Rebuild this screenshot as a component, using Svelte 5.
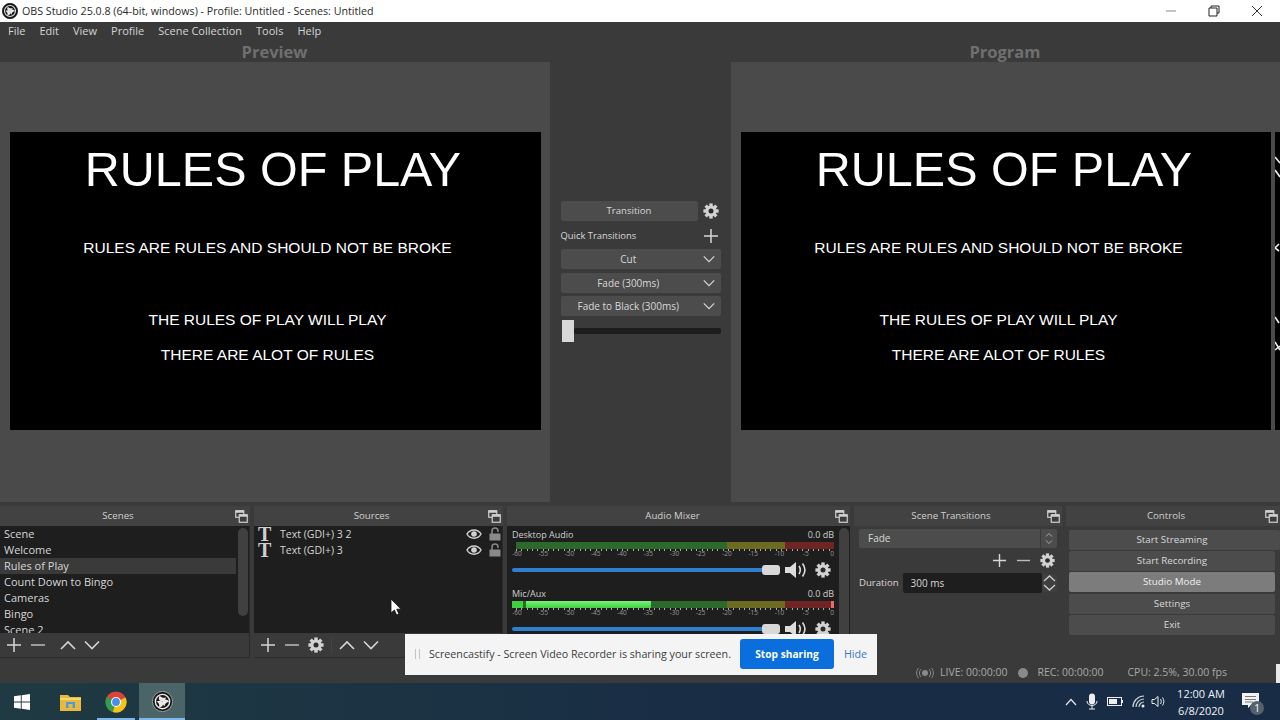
<script>
  const menus = ['File','Edit','View','Profile','Scene Collection','Tools','Help'];
  const scenes = ['Scene','Welcome','Rules of Play','Count Down to Bingo','Cameras','Bingo','Scene 2'];
  const ticks = ['-60','-55','-50','-45','-40','-35','-30','-25','-20','-15','-10','-5','0'];
  const teeth = [0,45,90,135];
  const controls = ['Start Streaming','Start Recording','Studio Mode','Settings','Exit'];
</script>

{#snippet gear(size = 16)}
  <svg class="icon" width={size} height={size} viewBox="0 0 16 16">
    {#each teeth as t}
      <rect x="6.3" y="0.4" width="3.4" height="15.2" fill="#d2d2d2" transform="rotate({t} 8 8)" />
    {/each}
    <circle cx="8" cy="8" r="5.6" fill="#d2d2d2" />
    <circle cx="8" cy="8" r="2.5" fill="#2b2b2b" />
  </svg>
{/snippet}
{#snippet plus(size = 16)}
  <svg class="icon" width={size} height={size} viewBox="0 0 16 16"><path d="M8 1v14M1 8h14" stroke="#d6d6d6" stroke-width="1.5" fill="none" /></svg>
{/snippet}
{#snippet minus(size = 16)}
  <svg class="icon" width={size} height={size} viewBox="0 0 16 16"><path d="M1 8h14" stroke="#bdbdbd" stroke-width="1.5" fill="none" /></svg>
{/snippet}
{#snippet up()}
  <svg class="icon" width="16" height="16" viewBox="0 0 16 16"><path d="M1 12l7-7 7 7" stroke="#d6d6d6" stroke-width="1.6" fill="none" /></svg>
{/snippet}
{#snippet down(size = 16)}
  <svg class="icon" width={size} height={size} viewBox="0 0 16 16"><path d="M1 4.5l7 7 7-7" stroke="#d6d6d6" stroke-width="1.6" fill="none" /></svg>
{/snippet}
{#snippet float()}
  <svg class="float" width="13" height="13" viewBox="0 0 13 13"><rect x="0.75" y="0.75" width="8" height="6.5" fill="#3c3c3c" stroke="#d2d2d2" stroke-width="1.2" /><rect x="0.75" y="0.75" width="8" height="2" fill="#d2d2d2" /><rect x="4.25" y="4.75" width="8" height="7.5" fill="#3c3c3c" stroke="#d2d2d2" stroke-width="1.2" /><rect x="4.25" y="4.75" width="8" height="2" fill="#d2d2d2" /></svg>
{/snippet}
{#snippet obs(size, ring)}
  <svg class="icon" width={size} height={size} viewBox="0 0 24 24">
    <circle cx="12" cy="12" r="11.5" fill="#151515" stroke={ring} stroke-width="1" />
    <circle cx="12" cy="12" r="8.2" fill="none" stroke="#e8e8e8" stroke-width="1.6" />
    <path d="M12 12C8 12 6.5 8 9 5.5 11 8 14 8.5 16 7 15.5 9.5 14.5 11 12 12Z" fill="#e8e8e8" />
    <path d="M12 12C14 15.5 11.5 19 8 18.5 9 15.5 7.5 13 5 12 7.4 11 9.5 10.5 12 12Z" fill="#e8e8e8" />
    <path d="M12 12C14 8.5 18.5 9.2 19.5 12.5 16.5 12.5 14.5 14.5 14.5 17.5 12.5 16 11.6 14.5 12 12Z" fill="#e8e8e8" />
  </svg>
{/snippet}
{#snippet scene()}
  <div class="scene-text">
    <div class="big">RULES OF PLAY</div>
    <div class="line l1">RULES ARE RULES AND SHOULD NOT BE BROKE</div>
    <div class="line l2">THE RULES OF PLAY WILL PLAY</div>
    <div class="line l3">THERE ARE ALOT OF RULES</div>
  </div>
{/snippet}
{#snippet meter(active)}
  <div class="meter" class:active>
    <div class="bars"></div>
    {#if active}<div class="hot"></div><div class="tip"></div>{/if}
  </div>
  <div class="scale"></div>
  <div class="tick-labels">{#each ticks as t}<span>{t}</span>{/each}</div>
{/snippet}
{#snippet fader()}
  <div class="fader-row">
    <div class="fader"><div class="knob"></div></div>
    <svg class="icon" width="24" height="20" viewBox="0 0 24 20"><path d="M1 7h5l6-5v16l-6-5H1z" fill="#dcdcdc" /><path d="M15 6c1.6 2.5 1.6 5.5 0 8M18.5 3.5c3 4 3 9 0 13" stroke="#dcdcdc" stroke-width="1.6" fill="none" /></svg>
    {@render gear(16)}
  </div>
{/snippet}

<div class="window">
  <header class="titlebar">
    {@render obs(16, '#151515')}
    <span class="title">OBS Studio 25.0.8 (64-bit, windows) - Profile: Untitled - Scenes: Untitled</span>
    <div class="winbtns">
      <svg width="12" height="12" viewBox="0 0 12 12"><path d="M1 6h10" stroke="#888" stroke-width="1" /></svg>
      <svg width="12" height="12" viewBox="0 0 12 12"><path d="M3 3V1h8v7H9M1 3h8v8H1z" stroke="#222" fill="none" /></svg>
      <svg width="12" height="12" viewBox="0 0 12 12"><path d="M1 1l10 10M11 1L1 11" stroke="#333" stroke-width="1" /></svg>
    </div>
  </header>

  <nav class="menubar">{#each menus as m}<span>{m}</span>{/each}</nav>

  <div class="labels">
    <span class="lab lab-prev">Preview</span>
    <span class="lab lab-prog">Program</span>
  </div>

  <main class="stage">
    <section class="pane left"><div class="canvas cl">{@render scene()}</div></section>
    <section class="middle">
      <div class="trow">
        <div class="btn transition">Transition</div>
        {@render gear(16)}
      </div>
      <div class="qrow"><span>Quick Transitions</span>{@render plus(16)}</div>
      <div class="btn combo"><span>Cut</span>{@render down(12)}</div>
      <div class="btn combo"><span>Fade (300ms)</span>{@render down(12)}</div>
      <div class="btn combo"><span>Fade to Black (300ms)</span>{@render down(12)}</div>
      <div class="tslider"><div class="handle"></div><div class="track"></div></div>
    </section>
    <section class="pane right">
      <div class="canvas cr">{@render scene()}</div>
      <div class="sliver">
        <svg width="5" height="298" viewBox="0 0 5 298"><path d="M0 25l5 6M0 38l5 7M4 112l-4 4 4 3M0 185l4 6M0 210l5 8M0 218l5-4" stroke="#eee" stroke-width="1.6" fill="none" /></svg>
      </div>
    </section>
  </main>

  <div class="docks">
    <section class="dock d-scenes">
      <div class="dock-title"><span>Scenes</span>{@render float()}</div>
      <div class="dock-body">
        <div class="list-wrap">
          <ul class="list">
            {#each scenes as s, i}<li class:sel={i === 2}>{s}</li>{/each}
          </ul>
          <div class="scroll"><div class="thumb"></div></div>
        </div>
        <div class="tools">{@render plus(16)}{@render minus(16)}<i class="sp"></i>{@render up()}{@render down()}</div>
      </div>
    </section>

    <section class="dock d-sources">
      <div class="dock-title"><span>Sources</span>{@render float()}</div>
      <div class="dock-body">
        <ul class="list src">
          {#each ['Text (GDI+) 3 2','Text (GDI+) 3'] as s}
            <li>
              <b class="tglyph">T</b><span class="sname">{s}</span>
              <svg class="icon" width="16" height="12" viewBox="0 0 16 12"><path d="M1 6c3-5.500 11-5.500 14 0-3 5.500-11 5.500-14 0z" fill="none" stroke="#d0d0d0" stroke-width="1.500" /><circle cx="8" cy="6" r="2.800" fill="#d0d0d0" /></svg>
              <svg class="icon lock" width="12" height="14" viewBox="0 0 12 14"><path d="M3 7V4a3 3 0 0 1 6 0v1" fill="none" stroke="#8a8a8a" stroke-width="1.500" /><rect x="0.500" y="6.500" width="11" height="7" fill="#8a8a8a" /></svg>
            </li>
          {/each}
        </ul>
        <div class="tools">{@render plus(16)}{@render minus(16)}{@render gear(16)}<i class="sep"></i>{@render up()}{@render down()}</div>
      </div>
    </section>

    <section class="dock d-mixer">
      <div class="dock-title"><span>Audio Mixer</span>{@render float()}</div>
      <div class="mixer-body">
        <div class="channels">
          <div class="channel">
            <div class="chead"><span>Desktop Audio</span><span>0.0 dB</span></div>
            {@render meter(false)}
            {@render fader()}
          </div>
          <div class="channel">
            <div class="chead"><span>Mic/Aux</span><span>0.0 dB</span></div>
            {@render meter(true)}
            {@render fader()}
          </div>
        </div>
        <div class="scroll mix"><div class="thumb"></div></div>
      </div>
    </section>

    <section class="dock d-trans">
      <div class="dock-title"><span>Scene Transitions</span>{@render float()}</div>
      <div class="plain">
        <div class="btn fade">
          <span>Fade</span>
          <svg width="16" height="19" viewBox="0 0 16 19"><path d="M5 7.500l3-3 3 3M5 11.500l3 3 3-3" stroke="#a8a8a8" fill="none" /></svg>
        </div>
        <div class="pm">{@render plus(15)}{@render minus(15)}{@render gear(15)}</div>
        <div class="dur">
          <span>Duration</span>
          <div class="spin"><span>300 ms</span></div>
          <div class="arrows">
            <svg width="15" height="9" viewBox="0 0 15 9"><path d="M2 7l5.500-5 5.500 5" stroke="#d0d0d0" stroke-width="1.300" fill="none" /></svg>
            <svg width="15" height="9" viewBox="0 0 15 9"><path d="M2 2l5.500 5 5.500-5" stroke="#d0d0d0" stroke-width="1.300" fill="none" /></svg>
          </div>
        </div>
      </div>
    </section>

    <section class="dock d-ctrl">
      <div class="dock-title"><span>Controls</span>{@render float()}</div>
      <div class="ctrl-list">
        {#each controls as c}<div class="btn ctrl" class:on={c === 'Studio Mode'}>{c}</div>{/each}
      </div>
    </section>
  </div>

  <footer class="status">
    <svg class="icon" width="18" height="12" viewBox="0 0 18 12"><circle cx="9" cy="6" r="3" fill="#8a8a8a" /><path d="M5 2c-2 2-2 6 0 8M13 2c2 2 2 6 0 8M2.500 1c-2.500 3-2.500 7 0 10M15.500 1c2.500 3 2.500 7 0 10" stroke="#8a8a8a" fill="none" /></svg>
    <span class="st-live">LIVE: 00:00:00</span>
    <i class="recdot"></i>
    <span class="st-rec">REC: 00:00:00</span>
    <span class="st-cpu">CPU: 2.5%, 30.00 fps</span>
    <i class="st-edge"></i>
  </footer>

  <div class="taskbar">
    <div class="tb-item start">
      <svg width="16" height="16" viewBox="0 0 16 16"><path d="M0 2.300l6.800-1v6.300H0zM7.700 1.200L16 0v7.600H7.700zM0 8.400h6.800v6.300L0 13.700zM7.700 8.400H16V16l-8.300-1.200z" fill="#fff" /></svg>
    </div>
    <div class="tb-item">
      <svg width="21" height="18" viewBox="0 0 21 18"><path d="M0 2h8l2 2h11v14H0z" fill="#e8b93e" /><path d="M0 5h21v2H0z" fill="#f6d76a" /><rect x="6" y="9" width="9" height="6" fill="#4f9ad6" /><rect x="8.500" y="11" width="4" height="4" fill="#e8b93e" /></svg>
    </div>
    <div class="tb-item open">
      <svg width="22" height="22" viewBox="0 0 22 22">
        <circle cx="11" cy="11" r="10.500" fill="#db4437" />
        <path d="M11 11L1.900 5.800A10.500 10.500 0 0 0 7.800 21z" fill="#2f9e4f" />
        <path d="M11 11l9.500-4.500A10.500 10.500 0 0 1 7.800 21z" fill="#f5c518" />
        <circle cx="11" cy="11" r="5" fill="#fff" /><circle cx="11" cy="11" r="3.900" fill="#4a8df0" />
      </svg>
    </div>
    <div class="tb-item active">{@render obs(21, '#aaa')}</div>

    <div class="tray">
      <svg width="12" height="8" viewBox="0 0 12 8"><path d="M1 7l5-5.500L11 7" stroke="#e8e8e8" stroke-width="1.200" fill="none" /></svg>
      <svg width="12" height="17" viewBox="0 0 12 17"><rect x="3" y="0.500" width="6" height="11" rx="3" fill="#eee" /><path d="M1 8c0 6 10 6 10 0M6 13v3M3 16h6" stroke="#eee" fill="none" /></svg>
      <svg width="16" height="9" viewBox="0 0 16 9"><rect x="0.500" y="0.500" width="14" height="8" fill="none" stroke="#eee" /><rect x="2" y="2" width="8" height="5" fill="#eee" /><rect x="15" y="3" width="1" height="3" fill="#eee" /></svg>
      <svg width="14" height="13" viewBox="0 0 14 13"><path d="M1 12a11 11 0 0 1 11-11M4 12a8 8 0 0 1 8-8M7 12a5 5 0 0 1 5-5" stroke="#c9d3dc" fill="none" stroke-width="1.200" /><circle cx="11" cy="11" r="1.500" fill="#eee" /></svg>
      <svg class="speaker" width="14" height="13" viewBox="0 0 14 13"><path d="M1 4.500h2.500l3.500-3v10l-3.500-3H1z" fill="none" stroke="#eee" /><path d="M9.500 4c1 1.500 1 3.500 0 5M11.500 2.500c1.800 2.500 1.800 5.500 0 8" stroke="#eee" fill="none" /></svg>
    </div>
    <div class="clock"><span>12:00 AM</span><span>6/8/2020</span></div>
    <div class="notif">
      <svg width="17" height="16" viewBox="0 0 17 16"><path d="M0 0h17v12h-8l-3 3v-3H0z" fill="#f2f2f2" /><path d="M3 3.500h11M3 6.500h11M3 9h8" stroke="#777" /></svg>
      <b>1</b>
    </div>
  </div>

  <div class="share">
    <span class="grip"></span>
    <span class="share-text">Screencastify - Screen Video Recorder is sharing your screen.</span>
    <span class="stop">Stop sharing</span>
    <span class="hide">Hide</span>
  </div>

  <svg class="cursor" width="12" height="18" viewBox="0 0 12 18"><path d="M1 1v14l3.400-3 2.200 5 2.300-1-2.200-4.800H11z" fill="#fff" stroke="#111" stroke-width="0.800" /></svg>
</div>

<style>
  :global(body) { margin: 0; background: #3a3a3a; }
  .window { position: relative; width: 1280px; height: 720px; overflow: hidden; display: flex; flex-direction: column; background: #3a3a3a; color: #d8d8d8; font: 11px/1 "Open Sans", "Noto Sans", sans-serif; }
  .icon { display: block; flex: none; }

  .titlebar { height: 22px; flex: none; background: #fff; display: flex; align-items: center; padding-left: 2px; color: #2a2a2a; box-sizing: border-box; }
  .title { margin-left: 4px; font-size: 10.7px; white-space: nowrap; }
  .winbtns { margin-left: auto; display: flex; gap: 31px; padding-right: 17px; }

  .menubar { height: 20px; flex: none; display: flex; align-items: center; gap: 14px; padding: 0 0 3px 8px; box-sizing: border-box; color: #d4d4d4; }
  .labels { height: 20px; flex: none; display: flex; align-items: center; font-weight: 700; font-size: 16.5px; color: #6f6f6f; }
  .lab { text-align: center; }
  .lab-prev { width: 551px; }
  .lab-prog { width: 552px; margin-left: 181px; }

  .stage { height: 440px; flex: none; display: flex; }
  .pane { background: #4a4a4a; display: flex; padding-top: 70px; box-sizing: border-box; }
  .left { width: 550px; padding-left: 10px; }
  .right { flex: 1; padding-left: 10px; }
  .canvas { background: #000; height: 298px; flex: none; overflow: hidden; }
  .cl { width: 531px; }
  .cr { width: 530px; }
  .sliver { margin-left: 4px; width: 5px; height: 298px; background: #000; }
  .sliver svg { display: block; }
  .scene-text { width: 515px; text-align: center; color: #fff; font-family: "Liberation Sans", Arial, sans-serif; white-space: nowrap; }
  .big { font-size: 48.5px; line-height: 52px; padding-top: 11px; margin-left: 11px; }
  .line { font-size: 15.5px; line-height: 18px; }
  .l1 { margin-top: 44px; }
  .l2 { margin-top: 54px; }
  .l3 { margin-top: 17px; }

  .middle { width: 181px; flex: none; box-sizing: border-box; padding: 139px 10px 0 10.500px; display: flex; flex-direction: column; }
  .btn { background: #4c4c4c; border-radius: 2px; display: flex; align-items: center; justify-content: center; color: #d8d8d8; font-size: 10px; box-sizing: border-box; }
  .trow { display: flex; align-items: center; justify-content: space-between; height: 20px; padding-right: 2px; }
  .transition { width: 137px; height: 20px; font-size: 9.600px; }
  .qrow { display: flex; align-items: center; justify-content: space-between; height: 20px; margin: 5px 0 3px; padding-right: 2px; font-size: 9.400px; }
  .combo { height: 20px; flex: none; margin-bottom: 3.500px; position: relative; padding-right: 25px; }
  .combo svg { position: absolute; right: 6px; top: 4px; }
  .tslider { position: relative; display: flex; align-items: center; height: 22px; padding-left: 1px; }
  .handle { width: 12px; height: 22px; background: #d8d8d8; flex: none; }
  .track { flex: 1; height: 6px; background: #1c1c1c; border-radius: 2px; }

  .docks { height: 160px; flex: none; display: flex; gap: 4px; padding-top: 3.500px; box-sizing: border-box; }
  .dock { flex: none; display: flex; flex-direction: column; min-width: 0; }
  .d-scenes { width: 250px; }
  .d-sources { width: 249px; }
  .d-mixer { width: 343px; }
  .d-trans { width: 208px; }
  .d-ctrl { width: 214px; }
  .dock-title { height: 20px; flex: none; position: relative; display: flex; align-items: center; justify-content: center; background: #424242; color: #cfcfcf; font-size: 9.700px; }
  .dock-title span { margin-right: 14px; }
  .d-mixer .dock-title span { margin-right: 12px; }
  .float { position: absolute; right: 2px; top: 4px; }
  .dock-body { flex: none; height: 132px; display: flex; flex-direction: column; border: 1px solid #2a2a2a; border-top: 0; border-left: 0; box-sizing: border-box; }
  .list-wrap { flex: none; height: 107px; display: flex; background: #1e1e1e; overflow: hidden; }
  .list { list-style: none; margin: 0; padding: 0; flex: 1; background: #1e1e1e; }
  .list li { height: 16px; line-height: 16px; padding-left: 4px; color: #d6d6d6; white-space: nowrap; }
  .list li.sel { background: #3a3a3a; }
  .scroll { width: 13px; flex: none; background: #1e1e1e; display: flex; justify-content: center; }
  .thumb { width: 10px; height: 88px; margin-top: 2px; background: #404040; border-radius: 5px; }
  .tools { height: 24px; flex: none; display: flex; align-items: center; gap: 8px; padding-left: 6px; background: #3a3a3a; }
  .tools .sp { width: 0; margin-left: -2px; }
  .tools .sep { width: 0; height: 16px; border-left: 1px solid #444; margin: 0 -1px; }
  .src { height: 107px; flex: none; }
  .src li { display: flex; align-items: center; padding-left: 4px; }
  .tglyph { width: 22px; font: 700 20px/16px "Liberation Serif", serif; color: #cfcfcf; flex: none; }
  .sname { flex: 1; font-size: 10.500px; }
  .lock { margin: 0 1px 0 7px; }

  .mixer-body { height: 132px; flex: none; display: flex; background: #1e1e1e; overflow: hidden; }
  .channels { flex: 1; padding: 4px 0 0 5px; min-width: 0; }
  .channel { height: 59px; padding-right: 3px; }
  .chead { display: flex; justify-content: space-between; font-size: 9px; height: 10px; align-items: center; color: #cfcfcf; }
  .meter { margin: 2px 0 0 4px; height: 7px; position: relative; background: #000; }
  .bars { height: 100%; background: linear-gradient(90deg, #2b6a2b 0 66.400%, #6d6a22 66.400% 84.600%, #702525 84.600%); }
  .hot { position: absolute; top: 0; bottom: 0; left: 10px; width: 125px; background: linear-gradient(#7cf07c, #3fd03f); }
  .hot::before { content: ""; position: absolute; left: -14px; top: 0; bottom: 0; width: 11px; background: #3fd03f; }
  .tip { position: absolute; right: 0; top: 0; bottom: 0; width: 3px; background: #e86a6a; }
  .scale { margin-left: 4px; height: 2px; background: repeating-linear-gradient(90deg, #aaa 0 1px, transparent 1px 5.300px); }
  .tick-labels { display: flex; justify-content: space-between; margin: 0 -3px 0 0; font-size: 6.500px; height: 8px; align-items: center; color: #9a9a9a; }
  .tick-labels span { width: 10px; text-align: center; }
  .fader-row { display: flex; align-items: center; gap: 7px; height: 18px; margin-top: 2px; padding-right: 3px; }
  .fader { flex: 1; height: 4px; background: #2f7fd0; border-radius: 2px; position: relative; margin-right: -3px; }
  .knob { position: absolute; right: 0; top: -3px; width: 18px; height: 10px; border-radius: 3px; background: #d8d8d8; }
  .mix { width: 13px; }
  .mix .thumb { height: 120px; }

  .plain { padding: 3px 5px 0 5px; display: flex; flex-direction: column; }
  .fade { height: 19px; justify-content: space-between; padding: 0 0 0 9px; }
  .fade svg { border-left: 1px solid #3a3a3a; }
  .pm { display: flex; justify-content: flex-end; align-items: center; gap: 9px; height: 24px; margin-top: 1px; padding-right: 2px; }
  .dur { display: flex; align-items: center; height: 20px; gap: 4px; font-size: 9.600px; }
  .spin { flex: 1; height: 20px; background: #1e1e1e; display: flex; align-items: center; padding-left: 8px; border-radius: 2px; font-size: 10px; }
  .arrows { margin-left: -4px; background: #3f3f3f; border-radius: 2px; }
  .arrows svg { display: block; }

  .ctrl-list { padding: 4px 0 0 3px; display: flex; flex-direction: column; gap: 1.400px; }
  .ctrl { height: 20px; width: 206px; font-size: 9.800px; }
  .ctrl:first-child { width: 211px; padding-right: 5px; }
  .ctrl.on { background: #7c7c7c; color: #eee; }

  .status { height: 21px; flex: none; position: relative; display: flex; align-items: center; padding-left: 916px; color: #a8a8a8; font-size: 10.500px; white-space: nowrap; }
  .st-live { margin-left: 6px; }
  .recdot { width: 10px; height: 10px; border-radius: 50%; background: #8a8a8a; margin-left: 10px; }
  .st-rec { margin-left: 10px; }
  .st-cpu { margin-left: 24px; }
  .st-edge { position: absolute; right: 0; top: 2px; bottom: 0; width: 4px; background: #e8e8e8; }

  .taskbar { flex: 1; display: flex; align-items: stretch; background: linear-gradient(90deg, #1f3a42, #182c45 60%); color: #eef2f6; }
  .tb-item { width: 46px; display: flex; align-items: center; justify-content: center; box-sizing: border-box; }
  .start { width: 47px; padding-right: 3px; }
  .open { background: linear-gradient(#7db8e8, #7db8e8) no-repeat center bottom / 38px 2px; }
  .active { background: #4a6468; box-shadow: inset 0 -2px 0 #7db8e8; }
  .tray { margin-left: auto; display: flex; align-items: center; gap: 9px; }
  .speaker { margin-left: -4px; }
  .clock { width: 60px; margin-left: 6px; display: flex; flex-direction: column; align-items: center; justify-content: center; gap: 6px; font-size: 11px; white-space: nowrap; }
  .notif { width: 49px; position: relative; display: flex; align-items: center; justify-content: center; padding: 0 11px 2px 0; box-sizing: border-box; }
  .notif b { position: absolute; left: 19px; top: 18px; width: 14px; height: 14px; line-height: 14px; text-align: center; font-size: 10px; font-weight: 400; border-radius: 50%; background: #55626e; color: #fff; }

  .share { position: absolute; left: 405px; top: 634px; width: 472px; height: 41px; background: #f4f4f4; display: flex; align-items: center; color: #3c4043; font-size: 10.700px; box-sizing: border-box; padding: 0 0 1px 10px; white-space: nowrap; }
  .grip { width: 5px; height: 10px; border-left: 1.500px solid #c4c4c4; border-right: 1.500px solid #c4c4c4; box-sizing: border-box; }
  .share-text { margin-left: 9px; flex: 1; }
  .stop { width: 94px; height: 30px; line-height: 30px; text-align: center; background: #0a6fdc; color: #fff; font-weight: 700; font-size: 10.200px; border-radius: 3px; }
  .hide { width: 43px; text-align: center; color: #3a78c8; }

  .cursor { position: absolute; left: 390px; top: 598px; }
</style>
